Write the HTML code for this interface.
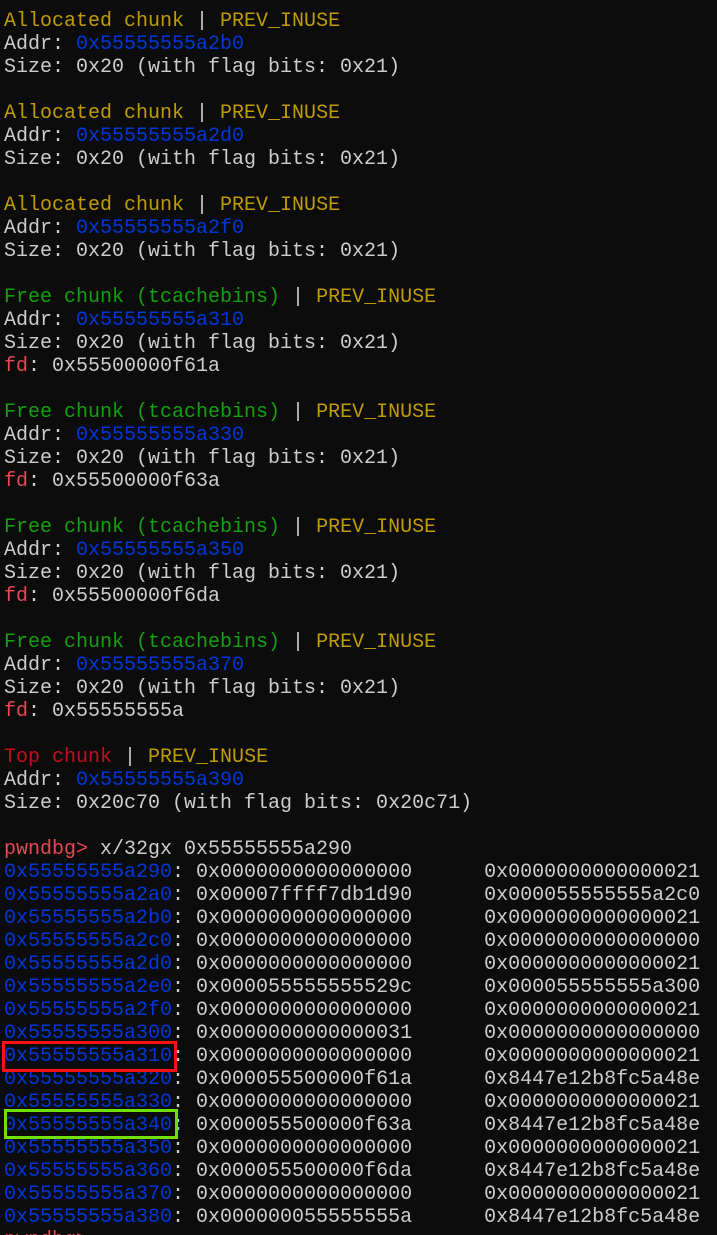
<!DOCTYPE html>
<html><head><meta charset="utf-8"><style>
html,body{margin:0;padding:0;background:#0c0c0c;width:717px;height:1235px;overflow:hidden;position:relative}
pre{margin:0;padding:10px 0 0 4px;font-family:"Liberation Mono",monospace;font-size:20px;line-height:23px;color:#cccccc}
.y{color:#c19c00}.b{color:#0037da}.g{color:#13a10e}.r{color:#e74856}.t{color:#c50f1f}
.box{position:absolute;border:3px solid;box-sizing:border-box}
</style></head><body>
<pre><span class="y">Allocated chunk</span> | <span class="y">PREV_INUSE</span>
Addr: <span class="b">0x55555555a2b0</span>
Size: 0x20 (with flag bits: 0x21)

<span class="y">Allocated chunk</span> | <span class="y">PREV_INUSE</span>
Addr: <span class="b">0x55555555a2d0</span>
Size: 0x20 (with flag bits: 0x21)

<span class="y">Allocated chunk</span> | <span class="y">PREV_INUSE</span>
Addr: <span class="b">0x55555555a2f0</span>
Size: 0x20 (with flag bits: 0x21)

<span class="g">Free chunk (tcachebins)</span> | <span class="y">PREV_INUSE</span>
Addr: <span class="b">0x55555555a310</span>
Size: 0x20 (with flag bits: 0x21)
<span class="r">fd</span>: 0x55500000f61a

<span class="g">Free chunk (tcachebins)</span> | <span class="y">PREV_INUSE</span>
Addr: <span class="b">0x55555555a330</span>
Size: 0x20 (with flag bits: 0x21)
<span class="r">fd</span>: 0x55500000f63a

<span class="g">Free chunk (tcachebins)</span> | <span class="y">PREV_INUSE</span>
Addr: <span class="b">0x55555555a350</span>
Size: 0x20 (with flag bits: 0x21)
<span class="r">fd</span>: 0x55500000f6da

<span class="g">Free chunk (tcachebins)</span> | <span class="y">PREV_INUSE</span>
Addr: <span class="b">0x55555555a370</span>
Size: 0x20 (with flag bits: 0x21)
<span class="r">fd</span>: 0x55555555a

<span class="t">Top chunk</span> | <span class="y">PREV_INUSE</span>
Addr: <span class="b">0x55555555a390</span>
Size: 0x20c70 (with flag bits: 0x20c71)

<span class="r">pwndbg&gt;</span> x/32gx 0x55555555a290
<span class="b">0x55555555a290</span>: 0x0000000000000000      0x0000000000000021
<span class="b">0x55555555a2a0</span>: 0x00007ffff7db1d90      0x000055555555a2c0
<span class="b">0x55555555a2b0</span>: 0x0000000000000000      0x0000000000000021
<span class="b">0x55555555a2c0</span>: 0x0000000000000000      0x0000000000000000
<span class="b">0x55555555a2d0</span>: 0x0000000000000000      0x0000000000000021
<span class="b">0x55555555a2e0</span>: 0x000055555555529c      0x000055555555a300
<span class="b">0x55555555a2f0</span>: 0x0000000000000000      0x0000000000000021
<span class="b">0x55555555a300</span>: 0x0000000000000031      0x0000000000000000
<span class="b">0x55555555a310</span>: 0x0000000000000000      0x0000000000000021
<span class="b">0x55555555a320</span>: 0x000055500000f61a      0x8447e12b8fc5a48e
<span class="b">0x55555555a330</span>: 0x0000000000000000      0x0000000000000021
<span class="b">0x55555555a340</span>: 0x000055500000f63a      0x8447e12b8fc5a48e
<span class="b">0x55555555a350</span>: 0x0000000000000000      0x0000000000000021
<span class="b">0x55555555a360</span>: 0x000055500000f6da      0x8447e12b8fc5a48e
<span class="b">0x55555555a370</span>: 0x0000000000000000      0x0000000000000021
<span class="b">0x55555555a380</span>: 0x000000055555555a      0x8447e12b8fc5a48e
<span class="r">pwndbg&gt;</span> </pre>
<div class="box" style="left:2px;top:1041px;width:175px;height:31px;border-color:#ff1010"></div>
<div class="box" style="left:4px;top:1109px;width:174px;height:30px;border-color:#6fe000"></div>
</body></html>
